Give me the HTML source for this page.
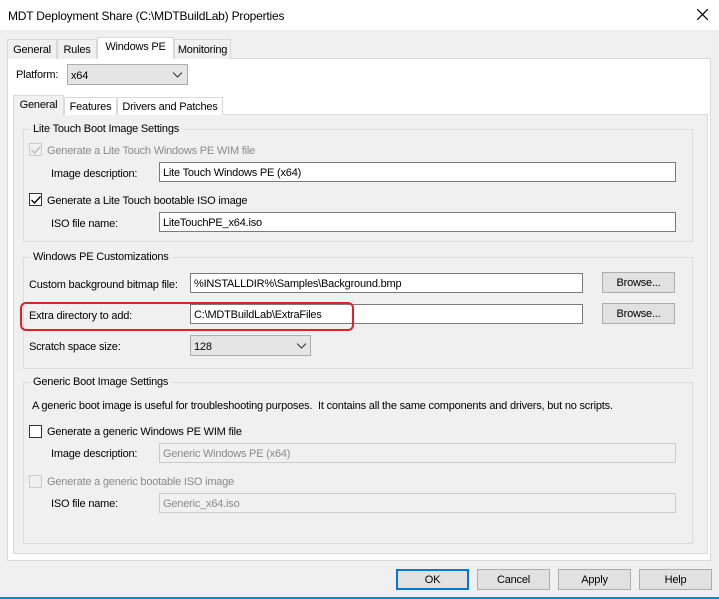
<!DOCTYPE html>
<html><head><style>
*{box-sizing:border-box;margin:0;padding:0;white-space:nowrap}
body{width:719px;height:599px;background:#f0f0f0;font-family:"Liberation Sans",sans-serif;font-size:11px;letter-spacing:-0.2px;color:#000;position:relative;overflow:hidden}
.a{position:absolute}
.t{margin-top:2px}
.tb{position:absolute;background:#fff;border:1px solid #7a7a7a;padding:3px 3px 1px;line-height:14px}
.dis{background:#f0f0f0;border-color:#ccc;color:#8a8a8a}
.btn{position:absolute;background:#e1e1e1;border:1px solid #adadad;text-align:center;line-height:21px}
.grp{position:absolute;border:1px solid #dcdcdc}
.gl{position:absolute;background:#f0f0f0;padding:0 3px;top:-7px;left:6px}
.cb{position:absolute;width:13px;height:13px;border:1px solid #333;background:#fff}
.tab{position:absolute;border:1px solid #d9d9d9;border-bottom:none;background:#f0f0f0;text-align:center;line-height:20px}
.g{color:#8a8a8a}
</style></head><body>
<div class="a" style="left:0;top:0;width:719px;height:30px;background:#fff"></div>
<div class="a" style="left:8px;top:9px;font-size:12px">MDT Deployment Share (C:\MDTBuildLab) Properties</div>
<svg class="a" style="left:697px;top:9px" width="11" height="11"><path d="M0 0L11 11M11 0L0 11" stroke="#000" stroke-width="1.2"/></svg>

<div class="a" style="left:7px;top:58px;width:704px;height:503px;background:#fff;border:1px solid #d9d9d9"></div>
<div class="tab" style="left:7px;top:39px;width:50px;height:20px">General</div>
<div class="tab" style="left:57px;top:39px;width:40px;height:20px">Rules</div>
<div class="tab" style="left:97px;top:37px;width:77px;height:22px;background:#fff;line-height:19px">Windows PE</div>
<div class="tab" style="left:174px;top:39px;width:57px;height:20px">Monitoring</div>

<div class="a t" style="left:16px;top:67px">Platform:</div>
<div class="a" style="left:67px;top:64px;width:121px;height:21px;background:#e5e5e5;border:1px solid #adadad;padding:5px 3px 0">x64</div>
<svg class="a" style="left:173px;top:72px" width="9" height="6"><path d="M0 0.5L4.5 5L9 0.5" stroke="#333" fill="none"/></svg>

<div class="a" style="left:13px;top:114px;width:695px;height:440px;background:#f0f0f0;border:1px solid #d9d9d9"></div>
<div class="tab" style="left:13px;top:95px;width:51px;height:20px;line-height:19px">General</div>
<div class="tab" style="left:64px;top:97px;width:53px;height:18px;background:#fff;line-height:18px">Features</div>
<div class="tab" style="left:117px;top:97px;width:106px;height:18px;background:#fff;line-height:18px">Drivers and Patches</div>

<div class="grp" style="left:23px;top:129px;width:670px;height:113px"><div class="gl">Lite Touch Boot Image Settings</div></div>
<div class="cb" style="left:29px;top:143px;border-color:#ccc;background:#f0f0f0"></div>
<svg class="a" style="left:31px;top:146px" width="10" height="8"><path d="M0.5 4L3.5 7L9.5 0.5" stroke="#bbb" fill="none" stroke-width="1.3"/></svg>
<div class="a g t" style="left:47px;top:143px">Generate a Lite Touch Windows PE WIM file</div>
<div class="a t" style="left:51px;top:166px">Image description:</div>
<div class="tb" style="left:159px;top:162px;width:517px;height:20px">Lite Touch Windows PE (x64)</div>
<div class="cb" style="left:29px;top:193px"></div>
<svg class="a" style="left:31px;top:196px" width="10" height="8"><path d="M0.5 4L3.5 7L9.5 0.5" stroke="#000" fill="none" stroke-width="1.3"/></svg>
<div class="a t" style="left:47px;top:193px">Generate a Lite Touch bootable ISO image</div>
<div class="a t" style="left:51px;top:216px">ISO file name:</div>
<div class="tb" style="left:159px;top:212px;width:517px;height:20px">LiteTouchPE_x64.iso</div>

<div class="grp" style="left:23px;top:257px;width:670px;height:112px"><div class="gl">Windows PE Customizations</div></div>
<div class="a t" style="left:29px;top:277px">Custom background bitmap file:</div>
<div class="tb" style="left:190px;top:273px;width:393px;height:20px">%INSTALLDIR%\Samples\Background.bmp</div>
<div class="btn" style="left:602px;top:272px;width:73px;height:21px">Browse...</div>
<div class="a t" style="left:29px;top:308px">Extra directory to add:</div>
<div class="tb" style="left:190px;top:304px;width:393px;height:20px">C:\MDTBuildLab\ExtraFiles</div>
<div class="btn" style="left:602px;top:303px;width:73px;height:21px">Browse...</div>
<div class="a" style="left:20px;top:302px;width:334px;height:29px;border:2px solid #e0202a;border-radius:6px"></div>
<div class="a t" style="left:29px;top:339px">Scratch space size:</div>
<div class="a" style="left:190px;top:335px;width:121px;height:21px;background:#e5e5e5;border:1px solid #adadad;padding:5px 3px 0">128</div>
<svg class="a" style="left:297px;top:343px" width="9" height="6"><path d="M0 0.5L4.5 5L9 0.5" stroke="#333" fill="none"/></svg>

<div class="grp" style="left:23px;top:382px;width:670px;height:162px"><div class="gl">Generic Boot Image Settings</div></div>
<div class="a t" style="left:32px;top:398px">A generic boot image is useful for troubleshooting purposes.&nbsp; It contains all the same components and drivers, but no scripts.</div>
<div class="cb" style="left:29px;top:425px"></div>
<div class="a t" style="left:47px;top:424px">Generate a generic Windows PE WIM file</div>
<div class="a t" style="left:51px;top:446px">Image description:</div>
<div class="tb dis" style="left:159px;top:443px;width:517px;height:20px">Generic Windows PE (x64)</div>
<div class="cb" style="left:29px;top:475px;border-color:#ccc;background:#f0f0f0"></div>
<div class="a g t" style="left:47px;top:474px">Generate a generic bootable ISO image</div>
<div class="a t" style="left:51px;top:496px">ISO file name:</div>
<div class="tb dis" style="left:159px;top:493px;width:517px;height:20px">Generic_x64.iso</div>

<div class="btn" style="left:396px;top:569px;width:73px;height:21px;border:2px solid #0078d7;line-height:19px">OK</div>
<div class="btn" style="left:477px;top:569px;width:73px;height:21px">Cancel</div>
<div class="btn" style="left:558px;top:569px;width:73px;height:21px">Apply</div>
<div class="btn" style="left:639px;top:569px;width:73px;height:21px">Help</div>
<div class="a" style="left:0;top:597px;width:719px;height:2px;background:#1a7fd4"></div>
</body></html>
